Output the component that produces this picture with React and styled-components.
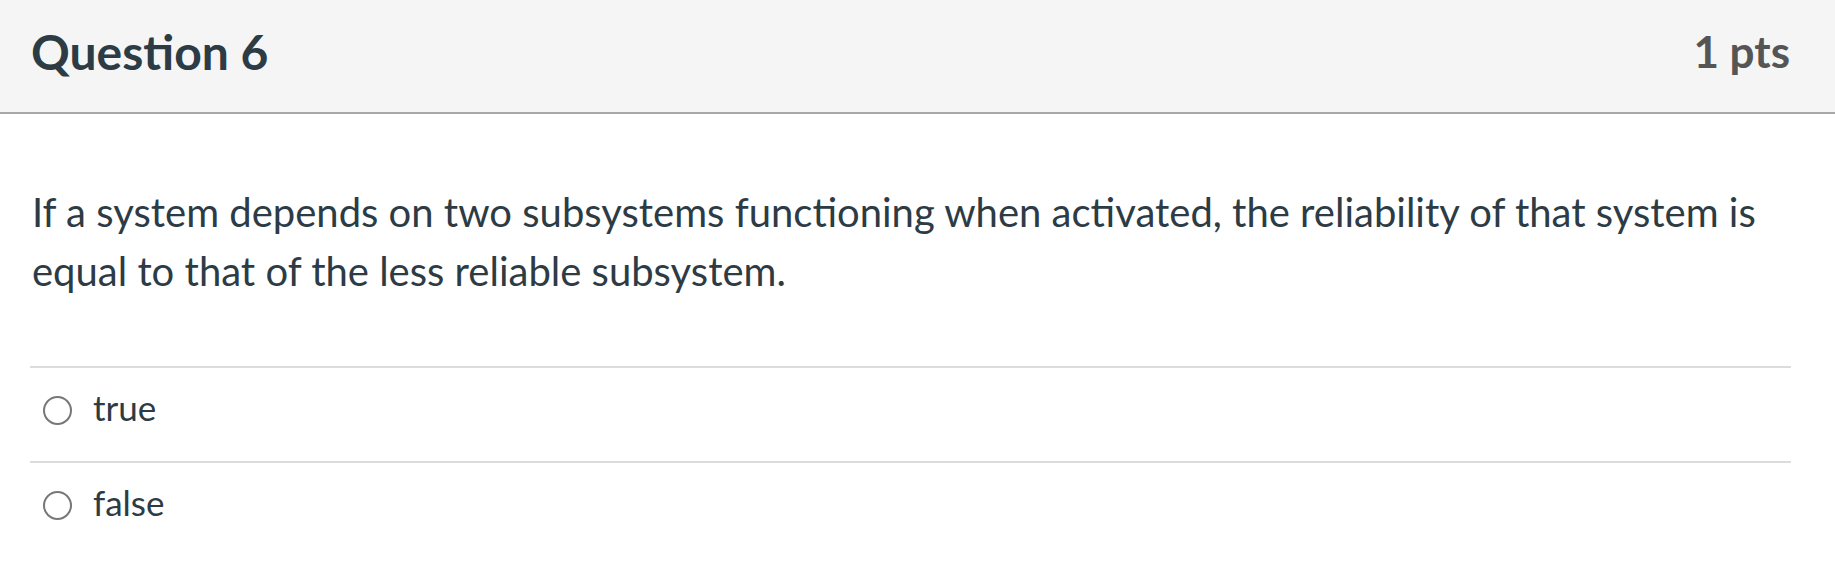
import React from 'react';
import styled, { createGlobalStyle } from 'styled-components';

const GlobalStyle = createGlobalStyle`
	html, body {
		margin: 0;
		padding: 0;
		background: #ffffff;
	}
	body {
		font-family: Lato, "Noto Sans", "Liberation Sans", sans-serif;
		color: #2d3b45;
	}
`

const Card = styled.div`
	width: 1835px;
	min-height: 577px;
	background: #ffffff;
`

const Header = styled.div`
	display: flex;
	justify-content: space-between;
	align-items: flex-start;
	height: 112px;
	padding: 0 45px 0 31px;
	background: #f5f5f5;
	border-bottom: 2px solid #a8a8a8;
	box-sizing: content-box;
`

const Title = styled.h2`
	margin: 28px 0 0;
	font-size: 48px;
	line-height: 48px;
	font-weight: 700;
	color: #2d3b45;
`

const Points = styled.div`
	margin-top: 29px;
	font-size: 44px;
	line-height: 44px;
	font-weight: 700;
	color: #555555;
`

const Body = styled.div`
	padding: 69px 44px 0 30px;
`

const Prompt = styled.p`
	margin: 0 0 65px 2px;
	font-size: 40px;
	line-height: 59px;
	color: #2d3b45;
`

const Answers = styled.div`
	display: flex;
	flex-direction: column;
`

const Answer = styled.label`
	display: flex;
	align-items: flex-start;
	height: 93px;
	border-top: 2px solid #dcdcdc;
`

const Radio = styled.span`
	box-sizing: border-box;
	width: 29px;
	height: 29px;
	margin: 28px 0 0 13px;
	border: 2.5px solid #777777;
	border-radius: 50%;
	background: #ffffff;
	flex-shrink: 0;
`

const AnswerText = styled.span`
	margin: 19px 0 0 21px;
	font-size: 35px;
	line-height: 40px;
	color: #2d3b45;
`

const options = ['true', 'false'];

const App = () => {
	return (
		<Card>
			<GlobalStyle />
			<Header>
				<Title>Question 6</Title>
				<Points>1 pts</Points>
			</Header>
			<Body>
				<Prompt>
					If a system depends on two subsystems functioning when activated, the reliability of that system is equal to that of the less reliable subsystem.
				</Prompt>
				<Answers>
					{options.map((o) => (
						<Answer key={o}>
							<Radio />
							<AnswerText>{o}</AnswerText>
						</Answer>
					))}
				</Answers>
			</Body>
		</Card>
	);
}

export default App;
